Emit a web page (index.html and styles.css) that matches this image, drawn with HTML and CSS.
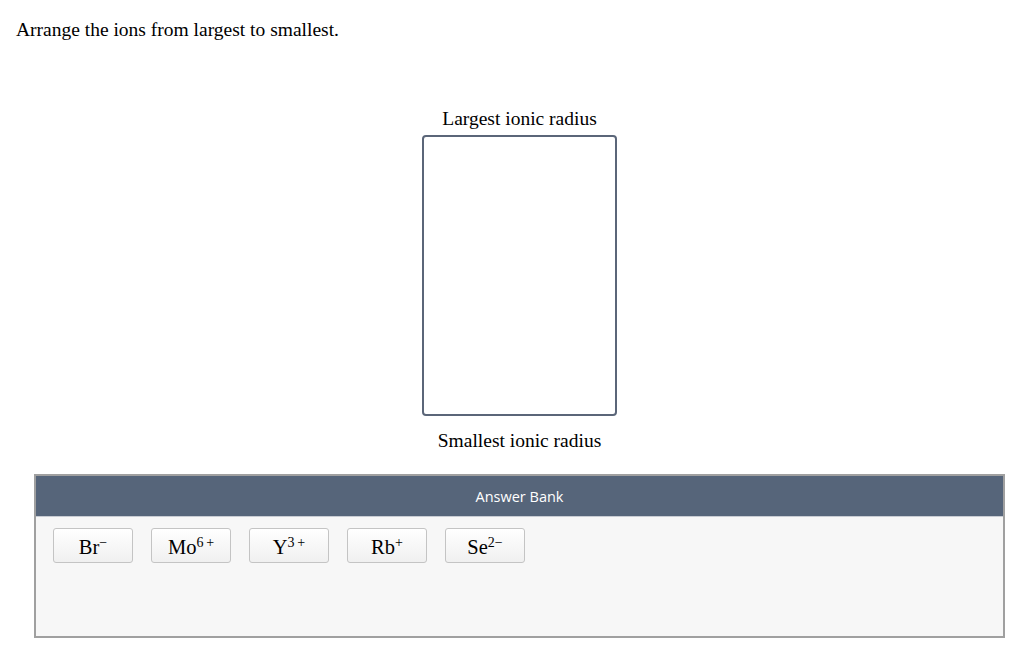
FILE: index.html
```html
<!doctype html>
<html lang="en">
  <head>
    <meta charset="UTF-8" />
    <meta name="viewport" content="width=device-width, initial-scale=1.0" />
    <title>Arrange the ions</title>
    <link rel="stylesheet" href="styles.css">
  </head>
  <body>
    <p class="question">Arrange the ions from largest to smallest.</p>

    <div class="ranking">
      <div class="rank-label">Largest ionic radius</div>
      <div class="drop-zone"></div>
      <div class="rank-label">Smallest ionic radius</div>
    </div>

    <div class="answer-bank">
      <div class="bank-header">Answer Bank</div>
      <div class="bank-body">
        <div class="tile">Br<sup>&minus;</sup></div>
        <div class="tile">Mo<sup>6&#8201;+</sup></div>
        <div class="tile">Y<sup>3&#8201;+</sup></div>
        <div class="tile">Rb<sup>+</sup></div>
        <div class="tile">Se<sup>2&minus;</sup></div>
      </div>
    </div>
  </body>
</html>
```

FILE: styles.css
```css
body {
  margin: 0;
  font-family: "Liberation Serif", "Times New Roman", serif;
  color: #000;
  background: #fff;
}
.question {
  margin: 0;
  padding: 19px 0 0 16px;
  font-size: 19.5px;
  line-height: 22px;
}
.ranking {
  display: flex;
  flex-direction: column;
  align-items: center;
  margin: 67px 0 0 34px;
  width: 971px;
}
.rank-label {
  font-size: 19.5px;
  line-height: 22px;
}
.drop-zone {
  width: 191px;
  height: 277px;
  margin: 5px 0 14px;
  border: 2px solid #5b6679;
  border-radius: 4px;
  background: #fff;
}
.answer-bank {
  margin: 22px 0 0 34px;
  width: 967px;
  border: 2px solid #a0a0a0;
}
.bank-header {
  height: 40px;
  line-height: 42px;
  background: #56657a;
  color: #fff;
  text-align: center;
  font-family: "Open Sans", "Noto Sans", sans-serif;
  font-size: 14.5px;
  border-bottom: 1px solid #c8ccd3;
}
.bank-body {
  display: flex;
  gap: 18px;
  padding: 11px 17px 0;
  height: 108px;
  background: #f7f7f7;
}
.tile {
  box-sizing: border-box;
  width: 80px;
  height: 35px;
  line-height: 36px;
  text-align: center;
  font-size: 20.5px;
  border: 1px solid #c4c4c4;
  border-radius: 3px;
  background: linear-gradient(#ffffff, #f0f0f0);
}
.tile sup {
  font-size: 14px;
  line-height: 0;
  vertical-align: 7px;
}
```
